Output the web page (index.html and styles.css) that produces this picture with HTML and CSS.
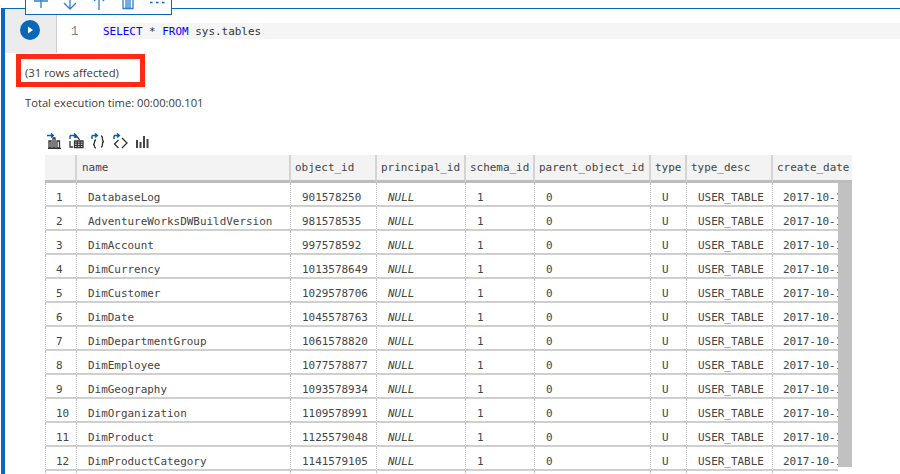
FILE: index.html
```html
<!DOCTYPE html>
<html lang="en">
<head>
<meta charset="utf-8">
<title>SELECT * FROM sys.tables</title>
<link rel="stylesheet" href="styles.css">
</head>
<body>
<div class="cell">
  <div class="cell-toolbar">
    <svg class="tb-icon" viewBox="0 0 16 16"><path d="M8 -3V12M1 5H15"/></svg>
    <svg class="tb-icon" viewBox="0 0 16 16"><path d="M8 -3V13M2 7L8 13L14 7"/></svg>
    <svg class="tb-icon" viewBox="0 0 16 16"><path d="M8 14V0M3 5L8 0L13 5"/></svg>
    <svg class="tb-icon" viewBox="0 0 16 16"><path d="M3 -2H13V12.500H3ZM6 -2V12M8 -2V12M10 -2V12"/></svg>
    <svg class="tb-icon" viewBox="0 0 16 16"><path class="dots" d="M1 6.500H3.500M7 6.500H9.500M13 6.500H15.500"/></svg>
  </div>
  <div class="editor">
    <div class="gutter">
      <button class="run" type="button" aria-label="Run">
        <svg viewBox="0 0 20 20" width="20" height="20"><circle cx="10" cy="10" r="10" fill="#0a66b9"/><path d="M8 6.500L13 10L8 13.500Z" fill="#fff"/></svg>
      </button>
    </div>
    <div class="line-number">1</div>
    <div class="code"><span class="kw">SELECT</span> * <span class="kw">FROM</span> sys.tables</div>
  </div>
  <div class="output">
    <div class="rows-affected">(31 rows affected)<span class="highlight"></span></div>
    <div class="exec-time">Total execution time: 00:00:00.101</div>
    <div class="grid-actions">
      <svg class="act" viewBox="0 0 15 16"><path class="arr" d="M0 2.500H6M4 0.500L6.300 2.500L4 4.500"/><path class="gry" d="M2 15V8H4V15ZM6 15V5H8V15ZM10 15V8H12.500V15ZM1 15.500H14"/></svg>
      <svg class="act" viewBox="0 0 15 16"><path class="arr" d="M1 2.500H7M5 0.500L7.300 2.500L5 4.500M1 2.500V6"/><path class="gry" d="M1 8V14H4M6 4H8.500L10.500 7"/><path class="gry" d="M5.500 8H14V14.500H5.500ZM5.500 10.200H14M5.500 12.400H14M8.300 8V14.500M11.200 8V14.500"/></svg>
      <svg class="act" viewBox="0 0 15 16"><path class="arr" d="M1 2.500H6M4 0.500L6.300 2.500L4 4.500M1 2.500V6"/><path class="gry" d="M5 7C3.500 7 3.500 8 3.500 9.500C3.500 11 2.800 11.500 2 11.500C2.800 11.500 3.500 12 3.500 13.500C3.500 14.800 4 15 5 15M10 3C11.500 3 11.500 4 11.500 6C11.500 7.500 12 8.500 13 8.500C12 8.500 11.500 9.500 11.500 11C11.500 13 11.500 14 10 14"/></svg>
      <svg class="act" viewBox="0 0 15 16"><path class="arr" d="M1 2.500H6M4 0.500L6.300 2.500L4 4.500M1 2.500V6"/><path class="gry" d="M5.500 7L1.500 11L5.500 15M9 5L14 10L9 15"/></svg>
      <svg class="act" viewBox="0 0 15 16"><path class="gry-f" d="M1 7H3V15H1ZM4.500 9H6.500V15H4.500ZM8 3H10V15H8ZM11.500 6H13.500V15H11.500Z"/></svg>
    </div>
    <div class="grid">
      <table>
        <colgroup>
          <col class="c-num"><col class="c-name"><col class="c-oid"><col class="c-pid"><col class="c-sid"><col class="c-poid"><col class="c-type"><col class="c-desc"><col class="c-date">
        </colgroup>
        <thead>
          <tr><th></th><th>name</th><th>object_id</th><th>principal_id</th><th>schema_id</th><th>parent_object_id</th><th>type</th><th>type_desc</th><th>create_date</th></tr>
        </thead>
        <tbody>
          <tr><td>1</td><td>DatabaseLog</td><td>901578250</td><td class="null">NULL</td><td>1</td><td>0</td><td>U</td><td>USER_TABLE</td><td>2017-10-1</td></tr>
          <tr><td>2</td><td>AdventureWorksDWBuildVersion</td><td>981578535</td><td class="null">NULL</td><td>1</td><td>0</td><td>U</td><td>USER_TABLE</td><td>2017-10-1</td></tr>
          <tr><td>3</td><td>DimAccount</td><td>997578592</td><td class="null">NULL</td><td>1</td><td>0</td><td>U</td><td>USER_TABLE</td><td>2017-10-1</td></tr>
          <tr><td>4</td><td>DimCurrency</td><td>1013578649</td><td class="null">NULL</td><td>1</td><td>0</td><td>U</td><td>USER_TABLE</td><td>2017-10-1</td></tr>
          <tr><td>5</td><td>DimCustomer</td><td>1029578706</td><td class="null">NULL</td><td>1</td><td>0</td><td>U</td><td>USER_TABLE</td><td>2017-10-1</td></tr>
          <tr><td>6</td><td>DimDate</td><td>1045578763</td><td class="null">NULL</td><td>1</td><td>0</td><td>U</td><td>USER_TABLE</td><td>2017-10-1</td></tr>
          <tr><td>7</td><td>DimDepartmentGroup</td><td>1061578820</td><td class="null">NULL</td><td>1</td><td>0</td><td>U</td><td>USER_TABLE</td><td>2017-10-1</td></tr>
          <tr><td>8</td><td>DimEmployee</td><td>1077578877</td><td class="null">NULL</td><td>1</td><td>0</td><td>U</td><td>USER_TABLE</td><td>2017-10-1</td></tr>
          <tr><td>9</td><td>DimGeography</td><td>1093578934</td><td class="null">NULL</td><td>1</td><td>0</td><td>U</td><td>USER_TABLE</td><td>2017-10-1</td></tr>
          <tr><td>10</td><td>DimOrganization</td><td>1109578991</td><td class="null">NULL</td><td>1</td><td>0</td><td>U</td><td>USER_TABLE</td><td>2017-10-1</td></tr>
          <tr><td>11</td><td>DimProduct</td><td>1125579048</td><td class="null">NULL</td><td>1</td><td>0</td><td>U</td><td>USER_TABLE</td><td>2017-10-1</td></tr>
          <tr><td>12</td><td>DimProductCategory</td><td>1141579105</td><td class="null">NULL</td><td>1</td><td>0</td><td>U</td><td>USER_TABLE</td><td>2017-10-1</td></tr>
          <tr><td></td><td></td><td></td><td></td><td></td><td></td><td></td><td></td><td></td></tr>
        </tbody>
      </table>
      <div class="scroll-track"><div class="scroll-thumb"></div></div>
    </div>
  </div>
</div>
</body>
</html>
```
FILE: styles.css
```css
* { box-sizing: border-box; }
html, body { margin: 0; height: 100%; background: #fff; overflow: hidden; }
body { font-family: "Open Sans", "Liberation Sans", sans-serif; color: #3a3a3a; }

.cell {
  position: relative;
  margin: 8px 0 0 1px;
  height: 466px;
  border-top: 1px solid #0a66b9;
  border-left: 4px solid #0a66c2;
}

.cell-toolbar {
  position: absolute;
  left: 20px;
  top: -9px;
  width: 147px;
  height: 15px;
  display: flex;
  align-items: flex-end;
  gap: 13px;
  padding: 0 0 2px 7px;
  background: #fff;
  border: 1px solid #0a66b9;
  border-top: 0;
  overflow: hidden;
}
.tb-icon { width: 16px; height: 16px; flex: none; overflow: visible; }
.tb-icon path { fill: none; stroke: #2f7fc9; stroke-width: 1.300; }
.tb-icon path.dots { stroke-width: 1.500; stroke: #0a66b9; }

.editor { display: flex; height: 44px; }
.gutter {
  width: 52px;
  flex: none;
  display: flex;
  align-items: center;
  padding: 0 0 2px 15px;
  background: #ececec;
  border-right: 1px solid #d0d0d0;
}
.run { display: block; width: 20px; height: 20px; padding: 0; border: 0; background: none; }
.line-number {
  width: 46px;
  flex: none;
  padding: 15px 0 0 14px;
  font: 12px/16px "Liberation Mono", monospace;
  color: #808080;
}
.code {
  flex: 1;
  align-self: flex-start;
  margin-top: 14px;
  height: 16px;
  background: #f5f5f5;
  font: 10.950px/17px "DejaVu Sans Mono", monospace;
  color: #333;
}
.kw { color: #0000ff; }

.output { padding: 0 0 0 20px; }
.rows-affected {
  position: relative;
  width: max-content;
  margin-top: 11px;
  font-size: 11.300px;
  line-height: 18px;
}
.highlight {
  position: absolute;
  left: -9px;
  top: -10px;
  width: 129px;
  height: 33px;
  border: 5px solid #ff2a12;
}
.exec-time {
  margin-top: 12px;
  font-size: 11.200px;
  line-height: 18px;
}
.grid-actions {
  display: flex;
  gap: 7px;
  margin: 21px 0 0 22px;
  height: 16px;
}
.act { width: 15px; height: 16px; flex: none; }
.act path { fill: none; }
.act .arr { stroke: #0a5fb0; stroke-width: 1.500; }
.act .gry { stroke: #333; stroke-width: 1.300; }
.act .gry-f { fill: #444; }

.grid {
  position: relative;
  width: 807px;
  margin: 6px 0 0 20px;
  overflow: hidden;
}
table {
  width: 807px;
  table-layout: fixed;
  border-collapse: separate;
  border-spacing: 0;
  font: 10.950px/15px "DejaVu Sans Mono", monospace;
  color: #444;
}
.c-num { width: 32px; }
.c-name { width: 214px; }
.c-oid { width: 86px; }
.c-pid { width: 89px; }
.c-sid { width: 69px; }
.c-poid { width: 116px; }
.c-type { width: 36px; }
.c-desc { width: 86px; }
.c-date { width: 79px; }
th {
  height: 28px;
  padding: 0 0 0 4px;
  font-weight: 400;
  text-align: left;
  white-space: nowrap;
  overflow: hidden;
  background: #f3f3f3;
  border-right: 2px solid #d4d4d4;
  border-bottom: 3px solid #bdbdbd;
}
th:nth-child(2) { padding-left: 5px; }
th:last-child { border-right: 0; }
td {
  height: 24px;
  padding: 7px 0 0 11px;
  white-space: nowrap;
  overflow: hidden;
  border-right: 1px dotted #bcbcbc;
  border-bottom: 2px solid #cfcfcf;
}
td:first-child { border-left: 1px dotted #bcbcbc; padding-left: 10px; }
td:last-child { padding-left: 10px; }
td.null { font-style: italic; }

.scroll-track {
  position: absolute;
  right: 0;
  top: 28px;
  bottom: 0;
  width: 14px;
  background: #fff;
}
.scroll-thumb { height: 284px; background: #c1c1c1; }
```
